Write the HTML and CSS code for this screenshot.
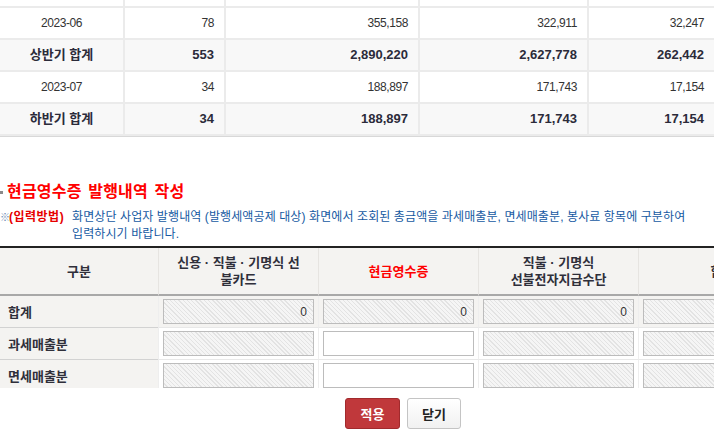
FILE: index.html
```html
<!DOCTYPE html>
<html lang="ko">
<head>
<meta charset="utf-8">
<title>현금영수증 발행내역 작성</title>
<link rel="stylesheet" href="styles.css">
</head>
<body>
<div class="page">
  <table class="summary">
    <colgroup>
      <col class="c1"><col class="c2"><col class="c3"><col class="c4"><col class="c5">
    </colgroup>
    <tbody>
      <tr class="cut"><td><div class="gap"></div></td><td></td><td></td><td></td><td></td></tr>
      <tr>
        <td class="center">2023-06</td><td class="num">78</td><td class="num">355,158</td><td class="num">322,911</td><td class="num">32,247</td>
      </tr>
      <tr class="sub">
        <td class="center">상반기 합계</td><td class="num">553</td><td class="num">2,890,220</td><td class="num">2,627,778</td><td class="num">262,442</td>
      </tr>
      <tr>
        <td class="center">2023-07</td><td class="num">34</td><td class="num">188,897</td><td class="num">171,743</td><td class="num">17,154</td>
      </tr>
      <tr class="sub">
        <td class="center">하반기 합계</td><td class="num">34</td><td class="num">188,897</td><td class="num">171,743</td><td class="num">17,154</td>
      </tr>
    </tbody>
  </table>

  <h2 class="title"><span class="bullet"></span>현금영수증 발행내역 작성</h2>

  <div class="note">
    <span class="mark">※</span>
    <span class="label">(입력방법)</span>
    <span class="desc">화면상단 사업자 발행내역 (발행세액공제 대상) 화면에서 조회된 총금액을 과세매출분, 면세매출분, 봉사료 항목에 구분하여<br>입력하시기 바랍니다.</span>
  </div>

  <div class="grid-wrap">
    <table class="entry">
      <colgroup>
        <col class="e1"><col class="e2"><col class="e3"><col class="e4"><col class="e5">
      </colgroup>
      <thead>
        <tr>
          <th>구분</th>
          <th>신용 · 직불 · 기명식 선<br>불카드</th>
          <th class="red">현금영수증</th>
          <th>직불 · 기명식<br>선불전자지급수단</th>
          <th>합계</th>
        </tr>
      </thead>
      <tbody>
        <tr class="total">
          <th>합계</th>
          <td><input class="ro" type="text" value="0" readonly></td>
          <td><input class="ro" type="text" value="0" readonly></td>
          <td><input class="ro" type="text" value="0" readonly></td>
          <td><input class="ro" type="text" value="" readonly></td>
        </tr>
        <tr>
          <th>과세매출분</th>
          <td><input class="ro" type="text" value="" readonly></td>
          <td><input class="rw" type="text" value=""></td>
          <td><input class="ro" type="text" value="" readonly></td>
          <td><input class="ro" type="text" value="" readonly></td>
        </tr>
        <tr>
          <th>면세매출분</th>
          <td><input class="ro" type="text" value="" readonly></td>
          <td><input class="rw" type="text" value=""></td>
          <td><input class="ro" type="text" value="" readonly></td>
          <td><input class="ro" type="text" value="" readonly></td>
        </tr>
      </tbody>
    </table>
  </div>

  <div class="actions">
    <button class="btn btn-apply" type="button">적용</button>
    <button class="btn btn-close" type="button">닫기</button>
  </div>
</div>
</body>
</html>
```
FILE: styles.css
```css
html, body {
  margin: 0;
  padding: 0;
  background: #fff;
}
body {
  width: 714px;
  height: 441px;
  overflow: hidden;
  font-family: "Liberation Sans", "Noto Sans CJK KR", sans-serif;
  color: #333;
}
.page {
  width: 806px;
}

/* summary table */
.summary {
  width: 714px;
  table-layout: fixed;
  border-collapse: separate;
  border-spacing: 0;
  border-bottom: 1px solid #d8d8d8;
}
.summary .c1 { width: 123px; }
.summary .c2 { width: 101px; }
.summary .c3 { width: 194px; }
.summary .c4 { width: 169px; }
.summary .c5 { width: 127px; }
.summary td {
  padding: 0 10px;
  line-height: 30px;
  border-bottom: 2px solid #ebebeb;
  border-left: 2px solid #ebebeb;
  font-size: 12px;
  letter-spacing: -0.4px;
  white-space: nowrap;
}
.summary td:first-child { border-left: 0; }
.summary .cut td { line-height: 0; }
.summary .gap { height: 6px; }
.summary .center { text-align: center; }
.summary .num { text-align: right; }
.summary .sub td {
  background: #f8f8f8;
  font-weight: bold;
  font-size: 13px;
  letter-spacing: 0;
  color: #2b2b3a;
}

/* title */
.title {
  margin: 45px 0 0;
  display: flex;
  align-items: center;
  gap: 4px;
  font-size: 16px;
  line-height: 20px;
  font-weight: bold;
  color: #f00;
  letter-spacing: 0.2px;
  word-spacing: 2px;
}
.bullet {
  width: 3px;
  height: 3px;
  background: #8a8a8a;
}

/* note */
.note {
  display: flex;
  margin-top: 7px;
  font-size: 12px;
  line-height: 17px;
}
.mark {
  width: 9px;
  font-size: 10px;
  color: #6d8cb3;
}
.label {
  width: 63px;
  font-size: 12px;
  font-weight: bold;
  color: #e60000;
  white-space: nowrap;
  letter-spacing: 0.5px;
}
.desc {
  color: #1559a2;
  white-space: nowrap;
  letter-spacing: 0.1px;
}

/* entry table */
.grid-wrap {
  margin-top: 3px;
  width: 806px;
  height: 142px;
  overflow: hidden;
}
.entry {
  width: 806px;
  table-layout: fixed;
  border-collapse: separate;
  border-spacing: 0;
  border-top: 2px solid #222;
}
.entry .e1 { width: 158px; }
.entry .e2 { width: 160px; }
.entry .e3 { width: 160px; }
.entry .e4 { width: 160px; }
.entry .e5 { width: 168px; }
.entry thead th {
  height: 46px;
  padding: 0 6px;
  background: #f4f3f1;
  border-bottom: 2px solid #a8a8a8;
  border-left: 1px solid #e6e4e1;
  font-size: 13px;
  line-height: 17px;
  font-weight: bold;
  color: #2f2f3a;
  text-align: center;
}
.entry thead th:first-child { border-left: 0; }
.entry thead th.red { color: #f00; }
.entry tbody th {
  height: 31px;
  padding: 0 8px;
  background: #f4f3f1;
  border-bottom: 1px solid #d2d2d2;
  text-align: left;
  font-size: 13px;
  font-weight: bold;
  color: #2f2f3a;
}
.entry tbody td {
  height: 31px;
  padding: 0 4px;
  border-bottom: 1px solid #e8e8e8;
  border-left: 1px solid #eeeeee;
  background: #fff;
}
.entry tbody tr.total td { background: #f4f3f1; }
.entry input {
  display: block;
  box-sizing: border-box;
  width: 100%;
  height: 25px;
  margin: 0;
  padding: 0 6px;
  border: 1px solid #bcbcbc;
  font-family: "Liberation Sans", "Noto Sans CJK KR", sans-serif;
  font-size: 12px;
  color: #333;
  text-align: right;
  outline: none;
}
.entry input.ro {
  background: repeating-linear-gradient(45deg, #f5f5f5 0 2px, #e3e3e3 2px 3px);
}
.entry input.rw {
  background: #fff;
}

/* buttons */
.actions {
  width: 806px;
  display: flex;
  justify-content: center;
  gap: 7px;
  margin-top: 10px;
}
.btn {
  height: 31px;
  padding: 0;
  border-radius: 3px;
  font-family: "Liberation Sans", "Noto Sans CJK KR", sans-serif;
  font-size: 13px;
  font-weight: bold;
  cursor: pointer;
}
.btn-apply {
  width: 55px;
  background: #c0383b;
  border: 1px solid #a12a2d;
  color: #fff;
}
.btn-close {
  width: 54px;
  background: linear-gradient(#ffffff, #f1f1f1);
  border: 1px solid #c4c4c4;
  color: #222;
}
```
